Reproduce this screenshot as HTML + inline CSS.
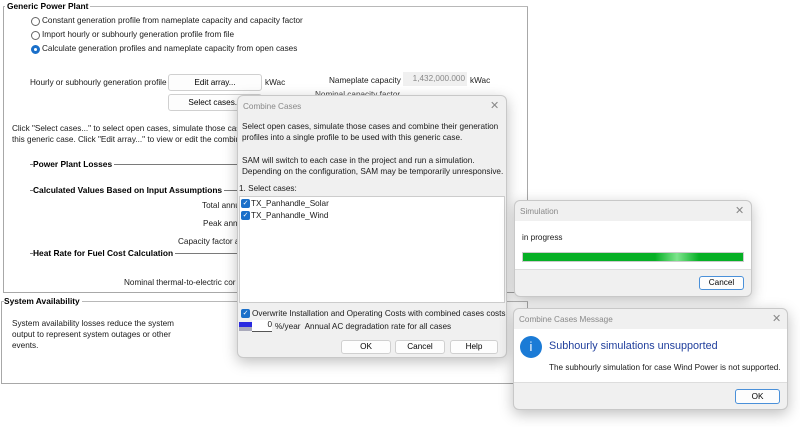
<!DOCTYPE html>
<html><head><style>
*{margin:0;padding:0;box-sizing:border-box}
body{width:800px;height:427px;background:#fff;font-family:"Liberation Sans",sans-serif;font-size:8.2px;color:#1a1a1a;position:relative;overflow:hidden}
.a{position:absolute;white-space:nowrap}
.b{font-weight:bold;color:#000;font-size:8.4px}
.hl{position:absolute;height:1px;background:#7a7a7a}
.btn{position:absolute;background:#fdfdfd;border:1px solid #d0d0d0;border-radius:3px;text-align:center;color:#000}
.radio{position:absolute;width:9px;height:9px;border:1px solid #666;border-radius:50%;background:#fff}
.chk{position:absolute;width:9px;height:9px;background:#1a6fc9;border-radius:2px;color:#fff;font-size:7px;line-height:9px;text-align:center}
.dlg{position:absolute;background:#f0f0f0;border:1px solid #c8c8c8;border-radius:6px;box-shadow:0 4px 14px rgba(0,0,0,.25);overflow:hidden}
.x{position:absolute;color:#888;font-size:11px}
</style></head><body>
<div class="a" style="left:3px;top:6px;width:525px;height:287px;border:1px solid #a8a8a8;border-top:none"></div>
<div class="hl" style="left:3px;top:6px;width:525px;background:#b8b8b8"></div>
<div class="a b" style="left:5px;top:1px;background:#fff;padding:0 2px">Generic Power Plant</div>
<div class="radio" style="left:31px;top:17px"></div>
<div class="a" style="left:42px;top:16px">Constant generation profile from nameplate capacity and capacity factor</div>
<div class="radio" style="left:31px;top:31px"></div>
<div class="a" style="left:42px;top:30px">Import hourly or subhourly generation profile from file</div>
<div class="radio" style="left:31px;top:45px;border:3px solid #1a6fc9"></div>
<div class="a" style="left:42px;top:44px">Calculate generation profiles and nameplate capacity from open cases</div>
<div class="a" style="left:30px;top:78px">Hourly or subhourly generation profile</div>
<div class="btn" style="left:168px;top:74px;width:94px;height:17px;line-height:15px">Edit array...</div>
<div class="a" style="left:265px;top:78px">kWac</div>
<div class="btn" style="left:168px;top:94px;width:94px;height:17px;line-height:15px">Select cases...</div>
<div class="a" style="left:329px;top:76px">Nameplate capacity</div>
<div class="a" style="left:403px;top:72px;width:64px;height:14px;background:#f0f0f0;color:#888;text-align:right;line-height:14px;padding-right:2px">1,432,000.000</div>
<div class="a" style="left:470px;top:76px">kWac</div>
<div class="a" style="left:315px;top:90px;color:#444">Nominal capacity factor</div>
<div class="a" style="left:12px;top:124px">Click "Select cases..." to select open cases, simulate those cases</div>
<div class="a" style="left:12px;top:135px">this generic case. Click "Edit array..." to view or edit the combine</div>
<div class="hl" style="left:30px;top:164px;width:210px"></div>
<div class="a b" style="left:33px;top:159px;background:#fff;padding-right:2px">Power Plant Losses</div>
<div class="hl" style="left:30px;top:190px;width:210px"></div>
<div class="a b" style="left:33px;top:185px;background:#fff;padding-right:2px">Calculated Values Based on Input Assumptions</div>
<div class="a" style="left:202px;top:201px">Total annu</div>
<div class="a" style="left:203px;top:219px">Peak annu</div>
<div class="a" style="left:178px;top:237px">Capacity factor a</div>
<div class="hl" style="left:30px;top:253px;width:210px"></div>
<div class="a b" style="left:33px;top:248px;background:#fff;padding-right:2px">Heat Rate for Fuel Cost Calculation</div>
<div class="a" style="left:124px;top:278px">Nominal thermal-to-electric cor</div>
<div class="a" style="left:1px;top:301px;width:527px;height:83px;border:1px solid #a8a8a8;border-top:none"></div>
<div class="hl" style="left:1px;top:301px;width:527px;background:#b8b8b8"></div>
<div class="a b" style="left:4px;top:296px;background:#fff;padding-right:2px">System Availability</div>
<div class="a" style="left:12px;top:318px;line-height:11px">System availability losses reduce the system<br>output to represent system outages or other<br>events.</div>

<div class="dlg" style="left:237px;top:95px;width:270px;height:263px">
 <div class="a" style="left:5px;top:6px;color:#888">Combine Cases</div>
 <div class="x" style="left:252px;top:3px">✕</div>
 <div class="a" style="left:4px;top:25px;line-height:11px">Select open cases, simulate those cases and combine their generation<br>profiles into a single profile to be used with this generic case.</div>
 <div class="a" style="left:4px;top:59px;line-height:11px">SAM will switch to each case in the project and run a simulation.<br>Depending on the configuration, SAM may be temporarily unresponsive.</div>
 <div class="a" style="left:1px;top:88px">1. Select cases:</div>
 <div class="a" style="left:1px;top:100px;width:266px;height:107px;background:#fff;border:1px solid #ccc"></div>
 <div class="chk" style="left:3px;top:103px">✓</div>
 <div class="a" style="left:13px;top:103px">TX_Panhandle_Solar</div>
 <div class="chk" style="left:3px;top:115px">✓</div>
 <div class="a" style="left:13px;top:115px">TX_Panhandle_Wind</div>
 <div class="chk" style="left:3px;top:213px">✓</div>
 <div class="a" style="left:14px;top:213px">Overwrite Installation and Operating Costs with combined cases costs</div>
 <div class="a" style="left:1px;top:226px;width:13px;height:5px;background:#2a2ae0"></div>
 <div class="a" style="left:1px;top:231px;width:13px;height:4px;background:#aab"></div>
 <div class="a" style="left:14px;top:224px;width:20px;height:12px;background:#fff;border-bottom:1px solid #555;text-align:right">0</div>
 <div class="a" style="left:37px;top:226px">%/year&nbsp; Annual AC degradation rate for all cases</div>
 <div class="btn" style="left:103px;top:244px;width:50px;height:14px;line-height:12px">OK</div>
 <div class="btn" style="left:157px;top:244px;width:50px;height:14px;line-height:12px">Cancel</div>
 <div class="btn" style="left:212px;top:244px;width:48px;height:14px;line-height:12px">Help</div>
</div>

<div class="dlg" style="left:514px;top:200px;width:238px;height:97px">
 <div class="a" style="left:5px;top:6px;color:#888">Simulation</div>
 <div class="x" style="left:220px;top:3px">✕</div>
 <div class="a" style="left:0;top:20px;width:238px;height:49px;background:#fff;border-bottom:1px solid #ddd"></div>
 <div class="a" style="left:7px;top:32px">in progress</div>
 <div class="a" style="left:7px;top:51px;width:222px;height:10px;border:1px solid #ccc;background:linear-gradient(90deg,#06b025 0%,#06b025 60%,#7de48c 70%,#06b025 80%,#06b025 100%)"></div>
 <div class="btn" style="left:184px;top:75px;width:45px;height:14px;line-height:12px;border-color:#4a90d9">Cancel</div>
</div>

<div class="dlg" style="left:513px;top:308px;width:275px;height:102px">
 <div class="a" style="left:5px;top:6px;color:#888">Combine Cases Message</div>
 <div class="x" style="left:258px;top:3px">✕</div>
 <div class="a" style="left:0;top:20px;width:275px;height:54px;background:#fff;border-bottom:1px solid #ddd"></div>
 <div class="a" style="left:6px;top:27px;width:22px;height:22px;border-radius:50%;background:#1b7bd6;color:#fff;font-size:13px;text-align:center;line-height:22px">i</div>
 <div class="a" style="left:35px;top:31px;font-size:10.8px;color:#1f3e9c">Subhourly simulations unsupported</div>
 <div class="a" style="left:35px;top:54px">The subhourly simulation for case Wind Power is not supported.</div>
 <div class="btn" style="left:221px;top:80px;width:45px;height:15px;line-height:13px;border-color:#4a90d9">OK</div>
</div>
</body></html>
